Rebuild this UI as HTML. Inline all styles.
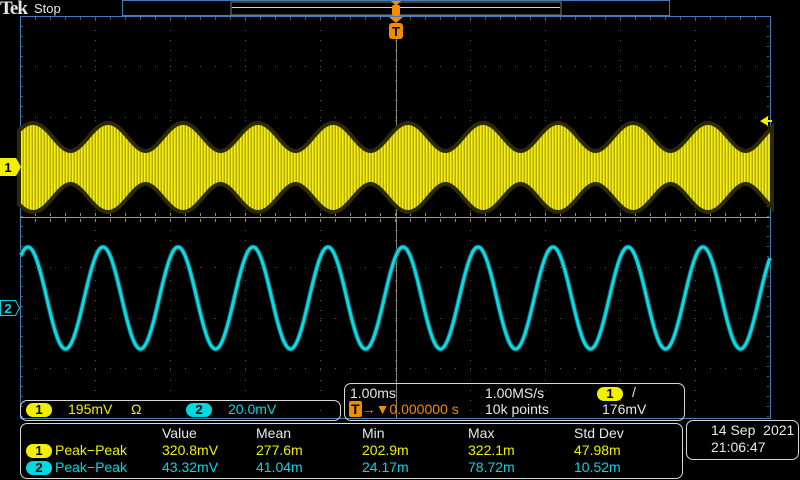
<!DOCTYPE html>
<html><head><meta charset="utf-8"><style>
html,body{margin:0;padding:0;background:#000;width:800px;height:480px;overflow:hidden}
body{position:relative;font-family:"Liberation Sans",sans-serif;font-size:14px}
.t{position:absolute;white-space:nowrap;line-height:15px}
.box{position:absolute;border:1px solid #d8d8d8;border-radius:7px}
.y{color:#f0f000}.c{color:#00d8e0}.w{color:#e8e8e8}.o{color:#f08c00}
.pill{position:absolute;border-radius:8px;width:26px;height:14px;text-align:center;color:#000;font-weight:bold;line-height:14px;font-size:13px}
</style></head><body>
<svg id="s" width="800" height="480" style="position:absolute;left:0;top:0">
<defs>
<pattern id="st" width="3" height="4" patternUnits="userSpaceOnUse">
<rect width="3" height="4" fill="#b4ac00"/><rect width="1.5" height="4" fill="#f8f010"/>
</pattern>
</defs>
<g id="grid"></g>
<rect x="20.5" y="16.5" width="750" height="402" fill="none" stroke="#4a7ab8"/>
<line x1="20" y1="217.5" x2="770" y2="217.5" stroke="#a09a88"/>
<line x1="396.5" y1="30" x2="396.5" y2="418" stroke="#8a8478"/>
<path id="yh" fill="none" stroke="#2c2a00" stroke-width="8"/>
<path id="yf" fill="url(#st)"/>
<path id="ch" fill="none" stroke="#066068" stroke-width="5"/>
<path id="cp" fill="none" stroke="#10d8e0" stroke-width="3"/>
<rect x="122.5" y="0.5" width="547" height="15" fill="none" stroke="#4a7ab8"/>
<rect x="231" y="2" width="330" height="13" fill="none" stroke="#888070"/>
<line x1="232" y1="7.5" x2="560" y2="7.5" stroke="#f0f000"/>
<polygon points="391,1 401,1 396,6" fill="#f08c00"/>
<rect x="392" y="5" width="8" height="11" rx="2" fill="#f08c00"/>
<polygon points="389,17 403,17 396,23" fill="#f08c00"/>
<rect x="389" y="23" width="14" height="16" rx="3" fill="#f08c00"/>
<text x="396" y="36" font-size="13" font-weight="bold" text-anchor="middle" fill="#000" font-family="Liberation Sans">T</text>
<polygon points="0,158 16,158 21,167 16,176 0,176" fill="#f0f000"/>
<text x="8" y="172" font-size="13" font-weight="bold" text-anchor="middle" fill="#000" font-family="Liberation Sans">1</text>
<polygon points="0.5,300.5 15.5,300.5 19.5,308 15.5,315.5 0.5,315.5" fill="#000" stroke="#00d8e0"/>
<text x="8" y="313" font-size="13" font-weight="bold" text-anchor="middle" fill="#00d8e0" font-family="Liberation Sans">2</text>
<polygon points="760,121 768,116 768,126" fill="#f0f000"/>
<line x1="766" y1="121" x2="772" y2="121" stroke="#f0f000" stroke-width="2"/>
</svg>
<div class="t w" style="left:0;top:0;font-family:'Liberation Serif',serif;font-weight:bold;font-size:19px;letter-spacing:-1px;line-height:17px">Tek</div>
<div class="t w" style="left:34px;top:1px;font-size:13px">Stop</div>

<div class="box" style="left:20px;top:400px;width:319px;height:19px"></div>
<div class="pill" style="left:26px;top:403px;background:#f0f000">1</div>
<div class="t y" style="left:68px;top:402px">195mV</div>
<div class="t y" style="left:131px;top:402px">Ω</div>
<div class="pill" style="left:186px;top:403px;background:#00d8e0">2</div>
<div class="t c" style="left:228px;top:402px">20.0mV</div>

<div class="box" style="left:344px;top:383px;width:339px;height:36px"></div>
<div class="t w" style="left:350px;top:386px">1.00ms</div>
<div class="t w" style="left:485px;top:386px">1.00MS/s</div>
<div class="pill" style="left:597px;top:387px;background:#f0f000">1</div>
<div class="t w" style="left:632px;top:385px">/</div>
<div class="t o" style="left:349px;top:402px"><span style="background:#f08c00;color:#000;font-weight:bold;padding:0 2px;border-radius:2px">T</span>→▼0.000000 s</div>
<div class="t w" style="left:485px;top:402px">10k points</div>
<div class="t w" style="left:602px;top:402px">176mV</div>

<div class="box" style="left:20px;top:423px;width:661px;height:54px"></div>
<div class="t w" style="left:162px;top:426px">Value</div>
<div class="t w" style="left:256px;top:426px">Mean</div>
<div class="t w" style="left:362px;top:426px">Min</div>
<div class="t w" style="left:468px;top:426px">Max</div>
<div class="t w" style="left:574px;top:426px">Std Dev</div>
<div class="pill" style="left:26px;top:444px;background:#f0f000">1</div>
<div class="t y" style="left:55px;top:443px">Peak−Peak</div>
<div class="t y" style="left:162px;top:443px">320.8mV</div>
<div class="t y" style="left:256px;top:443px">277.6m</div>
<div class="t y" style="left:362px;top:443px">202.9m</div>
<div class="t y" style="left:468px;top:443px">322.1m</div>
<div class="t y" style="left:574px;top:443px">47.98m</div>
<div class="pill" style="left:26px;top:461px;background:#00d8e0">2</div>
<div class="t c" style="left:55px;top:460px">Peak−Peak</div>
<div class="t c" style="left:162px;top:460px">43.32mV</div>
<div class="t c" style="left:256px;top:460px">41.04m</div>
<div class="t c" style="left:362px;top:460px">24.17m</div>
<div class="t c" style="left:468px;top:460px">78.72m</div>
<div class="t c" style="left:574px;top:460px">10.52m</div>

<div class="box" style="left:686px;top:420px;width:111px;height:38px"></div>
<div class="t w" style="left:711px;top:423px">14 Sep&nbsp; 2021</div>
<div class="t w" style="left:711px;top:440px">21:06:47</div>
<script>
(function(){
var g=document.getElementById('grid'),h='';
for(var i=1;i<10;i++){var x=20+i*75;for(var y=20;y<418;y+=10)h+='<rect x="'+x+'" y="'+y+'" width="1" height="1" fill="#5a5650"/>';}
for(var j=1;j<8;j++){var y=16+j*50.25;for(var x=20;x<770;x+=15)h+='<rect x="'+x+'" y="'+Math.round(y)+'" width="1" height="1" fill="#5a5650"/>';}
for(var x=35;x<770;x+=15){h+='<rect x="'+x+'" y="17" width="1" height="3" fill="#5a5650"/><rect x="'+x+'" y="213" width="1" height="3" fill="#908a80"/><rect x="'+x+'" y="219" width="1" height="3" fill="#908a80"/>';}
for(var y=26;y<418;y+=10){h+='<rect x="21" y="'+y+'" width="2" height="1" fill="#5a5650"/><rect x="767" y="'+y+'" width="2" height="1" fill="#5a5650"/>';}
g.innerHTML=h;
function env(x){return 28.5+14*Math.cos(2*Math.PI*(x-33)/75);}
var top=[],bot=[];
for(var x=21;x<=770;x+=1){var e=env(x);top.push(x+','+(167.5-e).toFixed(1));bot.unshift(x+','+(167.5+e).toFixed(1));}
var d='M'+top.join(' L')+' L'+bot.join(' L')+'Z';
document.getElementById('yf').setAttribute('d',d);
document.getElementById('yh').setAttribute('d',d);
var c=[];
for(var x=21;x<=770;x+=1){c.push(x+','+(298-51*Math.cos(2*Math.PI*(x-28)/75)).toFixed(1));}
var cd='M'+c.join(' L');
document.getElementById('cp').setAttribute('d',cd);
document.getElementById('ch').setAttribute('d',cd);
})();
</script>
</body></html>
